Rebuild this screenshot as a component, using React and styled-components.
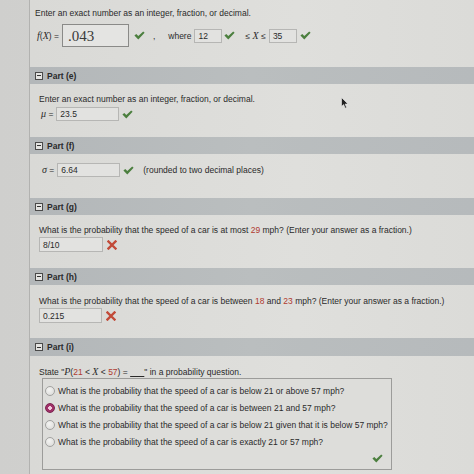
import React from "react";
import styled, { createGlobalStyle } from "styled-components";

const Global = createGlobalStyle`
  html, body { margin: 0; padding: 0; }
  body {
    background: #d2d2d0;
    font-family: "Liberation Sans", Arial, sans-serif;
    font-size: 8.5px;
    color: #2a2a2a;
  }
`;

const Page = styled.div`
  position: relative;
  width: 474px;
  height: 474px;
  overflow: hidden;
  padding-left: 29px;
  box-sizing: border-box;
  background: linear-gradient(90deg, #cfcfcd, #d8d8d6);
`;

const Panel = styled.div`
  height: 100%;
  background: linear-gradient(90deg, #d9d9d6 0%, #dfdfdc 60%, #dbdbd8 100%);
  border-left: 1px solid #b2b2b0;
  display: flex;
  flex-direction: column;
`;

const TopStrip = styled.div`
  height: 3px;
  background: #a8acae;
`;

const Body = styled.div`
  height: ${(p) => p.$h}px;
  padding: ${(p) => p.$pt}px 0 0 ${(p) => p.$pl ?? 9}px;
  box-sizing: border-box;
  display: flex;
  flex-direction: column;
  align-items: flex-start;
  gap: ${(p) => p.$gap ?? 2}px;
  flex-shrink: 0;
`;

const Header = styled.div`
  height: ${(p) => p.$h ?? 17}px;
  flex-shrink: 0;
  background: linear-gradient(90deg, #b3b7b9, #babebf 50%, #b6babc);
  display: flex;
  align-items: center;
  gap: 4px;
  padding-left: 5px;
  font-weight: bold;
  font-size: 8.5px;
  color: #2a2a2a;
`;

const Collapse = styled.span`
  width: 6px;
  height: 6px;
  border: 1px solid #4a4a4a;
  background: #e4e4e2;
  position: relative;
  display: inline-block;
  &::after {
    content: "";
    position: absolute;
    left: 1px;
    right: 1px;
    top: 2.5px;
    height: 1px;
    background: #333;
  }
`;

const Text = styled.div`
  line-height: 10px;
  white-space: nowrap;
`;

const Row = styled.div`
  display: flex;
  align-items: center;
  line-height: 10px;
  white-space: nowrap;
`;

const Item = styled.span`
  margin-left: ${(p) => p.$ml ?? 0}px;
  display: inline-flex;
  align-items: center;
`;

const Input = styled.span`
  margin-left: ${(p) => p.$ml ?? 0}px;
  width: ${(p) => p.$w}px;
  height: ${(p) => p.$ht ?? 14}px;
  box-sizing: border-box;
  border: 1px solid #b6b6b4;
  background: #e2e2e0;
  display: inline-flex;
  align-items: center;
  padding-left: 3px;
  font-size: 8.5px;
  color: #2a2a2a;
`;

const BigInput = styled(Input)`
  border: 1.5px solid #8a8a88;
  background: #e4e4e2;
  font-family: "Liberation Serif", "Times New Roman", serif;
  font-size: 15px;
  color: #3a3a3a;
  padding-left: 5px;
`;

const Red = styled.span`
  color: #b03a30;
`;

const Ital = styled.i`
  font-family: "Liberation Serif", serif;
  font-size: 10px;
`;

const Choices = styled.div`
  margin-left: 3px;
  width: 350px;
  border: 1px solid #9c9c9a;
  background: #dddddA;
  padding: 3px 0 2px 2px;
  box-sizing: border-box;
  display: flex;
  flex-direction: column;
`;

const Choice = styled.div`
  height: 17px;
  display: flex;
  align-items: center;
  gap: 3px;
  white-space: nowrap;
`;

const Radio = styled.span`
  width: 10px;
  height: 10px;
  border-radius: 50%;
  box-sizing: border-box;
  flex-shrink: 0;
  border: 1px solid ${(p) => (p.$on ? "#7a2450" : "#a2a2a0")};
  background: ${(p) =>
    p.$on
      ? "radial-gradient(circle, #f0c8dc 0 1.6px, #a03068 2px)"
      : "radial-gradient(circle at 40% 35%, #f4f4f2, #d8d8d6)"};
`;

const CheckRow = styled.div`
  height: 17px;
  display: flex;
  justify-content: flex-end;
  align-items: center;
  padding-right: 8px;
`;

const Cursor = styled.svg`
  position: absolute;
  left: 341px;
  top: 97px;
`;

const Check = ({ ml = 0 }) => (
  <Item $ml={ml}>
    <svg width="11" height="9" viewBox="0 0 11 9">
      <path
        d="M0.4 4.6 L2.3 3.0 L4.3 5.0 L9.2 0.4 L10.6 1.8 L4.3 8.6 Z"
        fill="#4b7f3e"
      />
    </svg>
  </Item>
);

const Cross = ({ ml = 0 }) => (
  <Item $ml={ml}>
    <svg width="10" height="10" viewBox="0 0 10 10">
      <path
        d="M1.5 1.5 L8.5 8.5 M8.5 1.5 L1.5 8.5"
        stroke="#c24a38"
        strokeWidth="2.4"
        strokeLinecap="square"
      />
    </svg>
  </Item>
);

const Part = ({ name, h }) => (
  <Header $h={h}>
    <Collapse />
    <span>Part ({name})</span>
  </Header>
);

const options = [
  "What is the probability that the speed of a car is below 21 or above 57 mph?",
  "What is the probability that the speed of a car is between 21 and 57 mph?",
  "What is the probability that the speed of a car is below 21 given that it is below 57 mph?",
  "What is the probability that the speed of a car is exactly 21 or 57 mph?",
];

export default function App() {
  return (
    <>
      <Global />
      <Page>
        <Panel>
          <TopStrip />
          <Body $h={67} $pt={8} $pl={5} $gap={6}>
            <Text>Enter an exact number as an integer, fraction, or decimal.</Text>
            <Row>
              <Item $ml={2}>
                <Ital>f</Ital>(<Ital>X</Ital>) =
              </Item>
              <BigInput $ml={3} $w={67} $ht={23}>.043</BigInput>
              <Check ml={5} />
              <Item $ml={8}>,</Item>
              <Item $ml={13}>where</Item>
              <Input $ml={3} $w={28}>12</Input>
              <Check ml={2} />
              <Item $ml={10}>
                ≤ <Ital>&nbsp;X&nbsp;</Ital> ≤
              </Item>
              <Input $ml={3} $w={28}>35</Input>
              <Check ml={3} />
            </Row>
          </Body>

          <Part name="e" />
          <Body $h={53} $pt={10} $gap={3}>
            <Text>Enter an exact number as an integer, fraction, or decimal.</Text>
            <Row>
              <Item $ml={2}>
                <Ital>μ</Ital>&nbsp;=
              </Item>
              <Input $ml={3} $w={63}>23.5</Input>
              <Check ml={3} />
            </Row>
          </Body>

          <Part name="f" />
          <Body $h={44} $pt={9}>
            <Row>
              <Item $ml={3}>
                <Ital>σ</Ital>&nbsp;=
              </Item>
              <Input $ml={3} $w={63}>6.64</Input>
              <Check ml={3} />
              <Item $ml={9}>(rounded to two decimal places)</Item>
            </Row>
          </Body>

          <Part name="g" />
          <Body $h={53} $pt={10} $gap={2}>
            <Text>
              What is the probability that the speed of a car is at most <Red>29</Red> mph? (Enter
              your answer as a fraction.)
            </Text>
            <Row>
              <Input $w={64} $ht={15}>8/10</Input>
              <Cross ml={4} />
            </Row>
          </Body>

          <Part name="h" />
          <Body $h={53} $pt={11} $gap={2}>
            <Text>
              What is the probability that the speed of a car is between <Red>18</Red> and{" "}
              <Red>23</Red> mph? (Enter your answer as a fraction.)
            </Text>
            <Row>
              <Input $w={63} $ht={15}>0.215</Input>
              <Cross ml={4} />
            </Row>
          </Body>

          <Part name="i" h={18} />
          <Body $h={120} $pt={11} $gap={1}>
            <Text>
              State "<Ital>P</Ital>(<Red>21</Red> &lt; <Ital>X</Ital> &lt; <Red>57</Red>) ={" "}
              <u>&nbsp;&nbsp;&nbsp;&nbsp;&nbsp;&nbsp;</u>" in a probability question.
            </Text>
            <Choices>
              {options.map((o, i) => (
                <Choice key={i}>
                  <Radio $on={i === 1} />
                  <span>{o}</span>
                </Choice>
              ))}
              <CheckRow>
                <Check />
              </CheckRow>
            </Choices>
          </Body>
        </Panel>
        <Cursor width="8" height="12" viewBox="0 0 8 12">
          <path d="M0.5 0.5 L0.5 9.5 L2.6 7.6 L4.2 11.2 L5.6 10.6 L4.1 7.1 L7 7 Z" fill="#222" stroke="#eee" strokeWidth="0.6" />
        </Cursor>
      </Page>
    </>
  );
}
